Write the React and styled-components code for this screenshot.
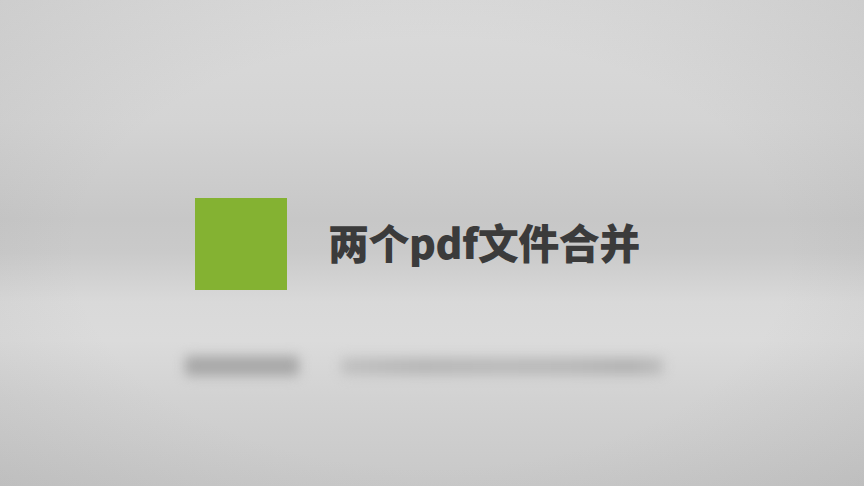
import React from "react";
import styled, { createGlobalStyle } from "styled-components";

const Global = createGlobalStyle`
  html, body { margin: 0; padding: 0; }
  body { width: 864px; height: 486px; overflow: hidden; }
`;

const Stage = styled.div`
  position: relative;
  width: 864px;
  height: 486px;
  box-sizing: border-box;
  padding: 198px 0 0 195px;
  display: flex;
  flex-direction: column;
  align-items: flex-start;
  overflow: hidden;
  background:
    radial-gradient(ellipse 75% 80% at 50% 52%, rgba(255,255,255,0) 55%, rgba(120,120,120,0.16) 100%),
    linear-gradient(
      to bottom,
      #dbdbdb 0%,
      #d4d4d4 25%,
      #c7c7c7 45%,
      #cacaca 52%,
      #d9d9d9 62%,
      #dbdbdb 70%,
      #d2d2d2 82%,
      #c8c8c8 100%
    );
  font-family: "Noto Sans CJK SC", "Noto Sans", sans-serif;
`;

const TitleRow = styled.div`
  display: flex;
  align-items: center;
  gap: 41px;
  height: 92px;
`;

const Square = styled.div`
  width: 92px;
  height: 92px;
  background: #84b232;
  flex: none;
`;

const Title = styled.h1`
  margin: 0;
  font-size: 41px;
  font-weight: 900;
  color: #3b3b3b;
  line-height: 1;
  letter-spacing: -0.5px;
  white-space: nowrap;
  transform: translateY(-3px);
`;

const ReflectionRow = styled.div`
  display: flex;
  align-items: center;
  gap: 42px;
  margin: 66px 0 0 -10px;
  filter: blur(6px);
`;

const Blob = styled.div`
  width: ${(p) => p.$w}px;
  height: ${(p) => p.$h}px;
  background: ${(p) => p.$bg};
  border-radius: 4px;
`;

export default function App() {
  return (
    <>
      <Global />
      <Stage>
        <TitleRow>
          <Square />
          <Title>两个pdf文件合并</Title>
        </TitleRow>
        <ReflectionRow>
          <Blob $w={114} $h={20} $bg="#a8a8a8" />
          <Blob
            $w={322}
            $h={17}
            $bg="linear-gradient(to right, #c0c0c0 0%, #b6b6b6 25%, #bababa 50%, #b8b8b8 70%, #b2b2b2 90%, #bebebe 100%)"
          />
        </ReflectionRow>
      </Stage>
    </>
  );
}
